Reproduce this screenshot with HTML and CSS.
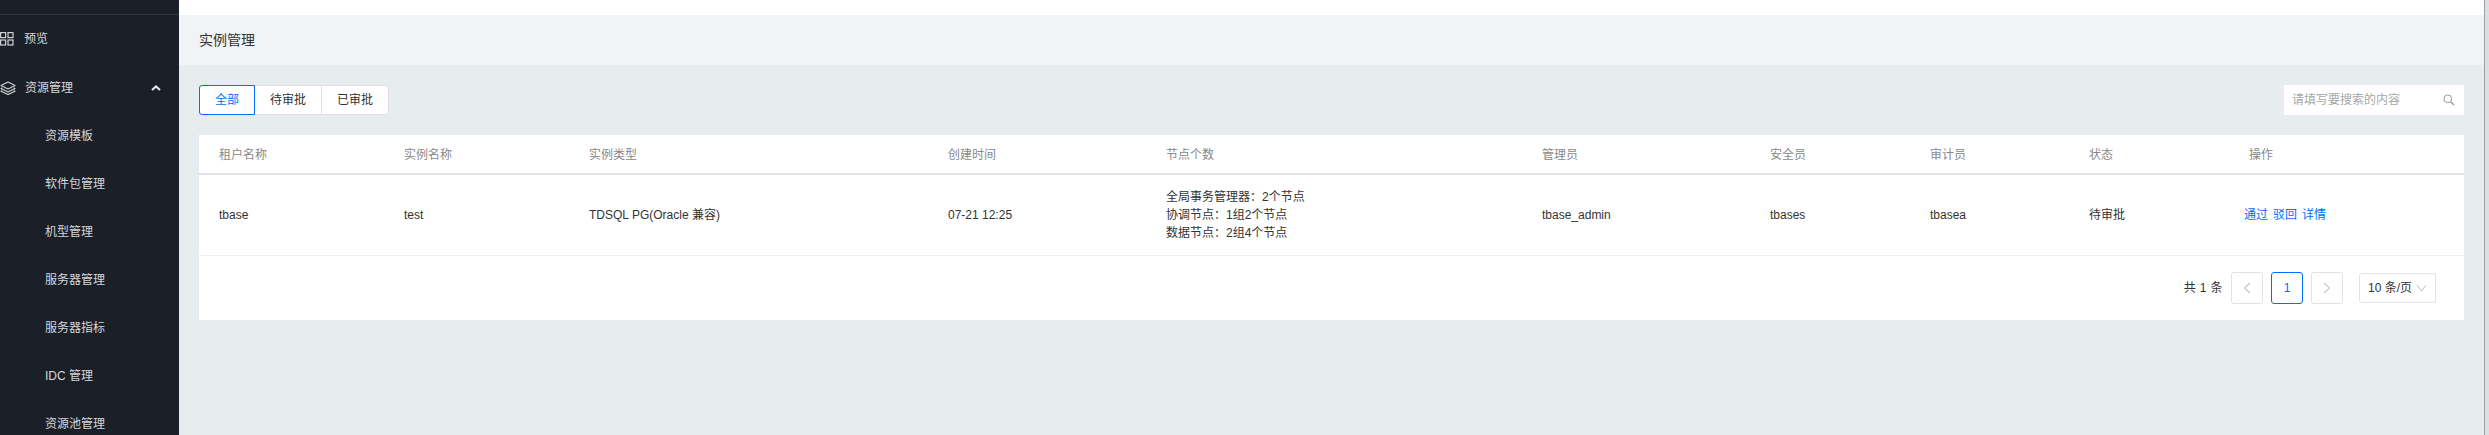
FILE: index.html
```html
<!DOCTYPE html>
<html lang="zh-CN">
<head>
<meta charset="utf-8">
<title>实例管理</title>
<link rel="stylesheet" href="styles.css">
</head>
<body>
<div class="app">
  <aside class="sidebar">
    <nav class="menu">
      <a class="menu-item menu-first">
        <svg class="menu-icon" viewBox="0 0 14 14"><g fill="none" stroke="#cfd1d4" stroke-width="1.2"><rect x="0.6" y="0.6" width="5" height="5"/><rect x="8" y="0.6" width="5" height="5"/><rect x="0.6" y="8" width="5" height="5"/><rect x="8" y="8" width="5" height="5"/></g></svg>
        <span>预览</span>
      </a>
      <a class="menu-item menu-open">
        <svg class="menu-icon" viewBox="0 0 16 14"><g fill="none" stroke="#cfd1d4" stroke-width="1.1" stroke-linejoin="round"><path d="M8 1 15 4.6 8 8 1 4.6Z"/><path d="M2.2 6.8 1 7.4 8 11 15 7.4 13.8 6.8"/><path d="M2.2 9.6 1 10.2 8 13.6 15 10.2 13.8 9.6"/></g></svg>
        <span>资源管理</span>
        <svg class="chevron" viewBox="0 0 10 6"><path d="M1 5 5 1.4 9 5" fill="none" stroke="#e8e9ea" stroke-width="2"/></svg>
      </a>
      <a class="sub-item">资源模板</a>
      <a class="sub-item">软件包管理</a>
      <a class="sub-item">机型管理</a>
      <a class="sub-item">服务器管理</a>
      <a class="sub-item">服务器指标</a>
      <a class="sub-item">IDC 管理</a>
      <a class="sub-item">资源池管理</a>
    </nav>
  </aside>
  <main class="main">
    <div class="topbar"></div>
    <header class="page-head">实例管理</header>
    <section class="content">
      <div class="toolbar">
        <div class="tabs">
          <button class="tab tab-active">全部</button>
          <button class="tab tab-mid">待审批</button>
          <button class="tab tab-last">已审批</button>
        </div>
        <div class="search">
          <span class="search-text">请填写要搜索的内容</span>
          <svg class="search-icon" viewBox="0 0 12 12"><circle cx="4.8" cy="4.8" r="3.9" fill="none" stroke="#9a9a9a" stroke-width="1"/><path d="M7.7 7.7 11 11" stroke="#9a9a9a" stroke-width="1.3" fill="none"/></svg>
        </div>
      </div>
      <div class="card">
        <div class="row row-head">
          <div>租户名称</div><div>实例名称</div><div>实例类型</div><div>创建时间</div><div>节点个数</div><div>管理员</div><div>安全员</div><div>审计员</div><div>状态</div><div class="op-head">操作</div>
        </div>
        <div class="row row-body">
          <div>tbase</div><div>test</div><div>TDSQL PG(Oracle 兼容)</div><div>07-21 12:25</div>
          <div class="nodes"><p>全局事务管理器：2个节点</p><p>协调节点：1组2个节点</p><p>数据节点：2组4个节点</p></div>
          <div>tbase_admin</div><div>tbases</div><div>tbasea</div><div>待审批</div>
          <div class="ops"><a>通过</a><a>驳回</a><a>详情</a></div>
        </div>
        <div class="pager">
          <span class="total">共 1 条</span>
          <span class="page-btn"><svg viewBox="0 0 8 12"><path d="M7 1 1.5 6 7 11" fill="none" stroke="#c4c6c9" stroke-width="1.1"/></svg></span>
          <span class="page-btn page-current">1</span>
          <span class="page-btn"><svg viewBox="0 0 8 12"><path d="M1 1 6.5 6 1 11" fill="none" stroke="#c4c6c9" stroke-width="1.1"/></svg></span>
          <span class="page-size">10 条/页<svg viewBox="0 0 12 8"><path d="M1 1 6 7 11 1" fill="none" stroke="#c4c6c9" stroke-width="1.1"/></svg></span>
        </div>
      </div>
    </section>
  </main>
  <div class="scroll-edge"></div>
</div>
</body>
</html>
```
FILE: styles.css
```css
* { box-sizing: border-box; }
html, body { margin: 0; height: 100%; overflow: hidden; }
body { font-family: "Liberation Sans", "Noto Sans CJK SC", sans-serif; font-size: 12px; line-height: 18px; color: #333; background: #fff; }
.app { display: flex; height: 435px; width: 2489px; }
.sidebar { width: 179px; flex: none; background: #1b1f27; overflow: hidden; height: 435px; }
.menu { display: flex; flex-direction: column; margin-top: 14px; border-top: 1px solid #33363d; }
.menu-item { display: flex; align-items: center; flex: none; height: 48px; color: #d6d7d9; }
.menu-first { height: 47px; margin-bottom: 2px; }
.menu-icon { width: 14px; height: 14px; flex: none; margin-right: 10px; }
.menu-open .menu-icon { width: 16px; margin-right: 9px; }
.chevron { width: 10px; height: 6px; margin-left: 78px; }
.sub-item { display: block; flex: none; height: 48px; line-height: 48px; padding-left: 45px; color: #d6d7d9; }
.main { flex: none; width: 2305px; display: flex; flex-direction: column; background: #e7ecef; }
.topbar { height: 15px; background: #fff; }
.page-head { height: 50px; line-height: 50px; padding-left: 20px; font-size: 14px; background: #f0f4f7; color: #333; }
.content { padding: 20px 20px 0; }
.toolbar { display: flex; justify-content: space-between; height: 30px; }
.tabs { display: flex; }
.tab { height: 30px; padding: 0; font: inherit; color: #333; background: #fff; border: 1px solid #dcdfe3; border-left: 0; }
.tab-active { width: 56px; color: #006eff; border: 1px solid #006eff; border-radius: 3px 0 0 3px; }
.tab-mid { width: 67px; }
.tab-last { width: 67px; border-radius: 0 3px 3px 0; }
.search { display: flex; align-items: center; justify-content: space-between; width: 180px; height: 30px; padding: 0 9px 0 8px; background: #fff; }
.search-text { color: #a6a6a6; }
.search-icon { width: 12px; height: 12px; }
.card { margin-top: 20px; background: #fff; }
.row { display: grid; grid-template-columns: 185px 185px 359px 218px 376px 228px 160px 159px 155px 1fr; padding-left: 20px; }
.row > div { display: flex; align-items: center; }
.row-head { height: 40px; padding-top: 2px; color: #888; border-bottom: 2px solid #e0e3e5; }
.op-head { padding-left: 5px; }
.row-body { height: 81px; border-bottom: 1px solid #eeeff0; }
.row-body > div { color: #333; }
.row > .nodes { display: block; align-self: center; }
.nodes p { margin: 0; }
.ops { gap: 5px; }
.ops a { color: #006eff; }
.pager { display: flex; align-items: center; justify-content: flex-end; height: 64px; padding-right: 28px; }
.total { margin-right: 8px; letter-spacing: 0.4px; }
.page-btn { display: flex; align-items: center; justify-content: center; width: 32px; height: 32px; margin-right: 8px; border: 1px solid #dfe1e3; border-radius: 3px; background: #fff; }
.page-btn svg { width: 8px; height: 12px; }
.page-current { color: #006eff; border-color: #006eff; }
.page-size { display: flex; align-items: center; justify-content: space-between; width: 77px; height: 30px; margin-left: 8px; padding: 0 8px; border: 1px solid #dfe1e3; border-radius: 3px; }
.page-size svg { width: 11px; height: 8px; }
.scroll-edge { flex: none; width: 5px; background: #dcdee2; border-left: 1px solid #9c9ea1; }
```
